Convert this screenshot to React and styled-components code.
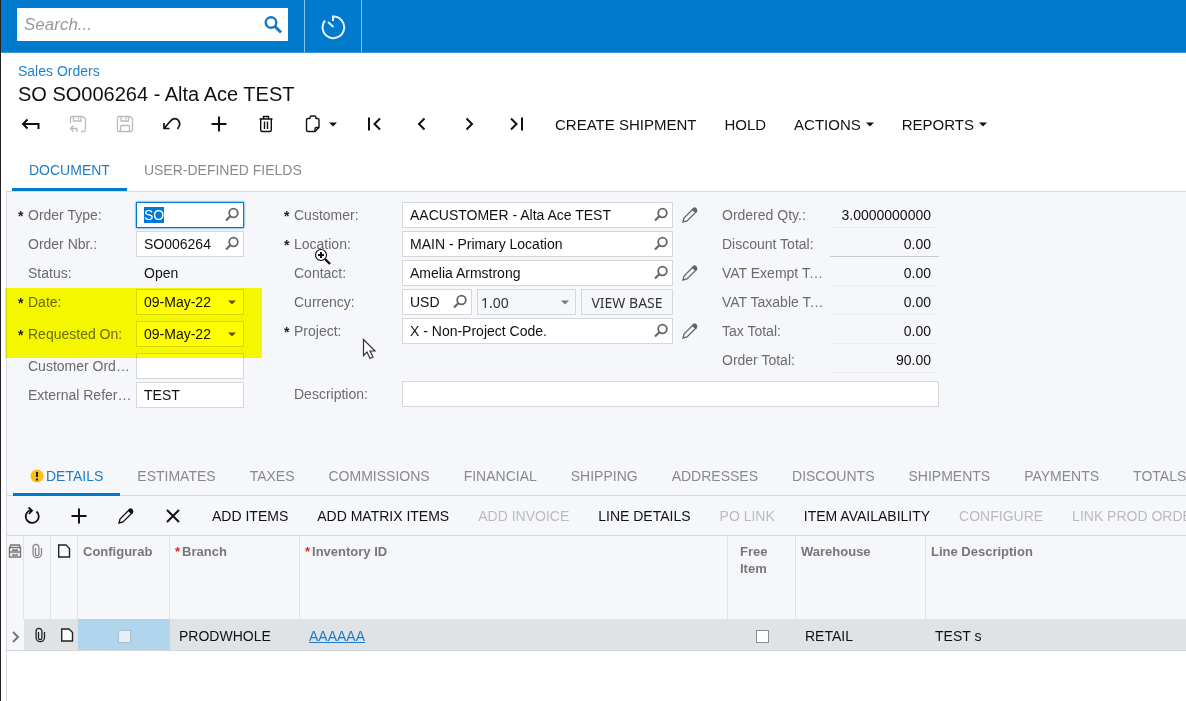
import React, { useEffect, useRef } from "react";
import styled, { createGlobalStyle } from "styled-components";

const GlobalStyle = createGlobalStyle`
  * {
    box-sizing: border-box;
  }

  body {
    margin: 0;
    background: #fff;
    color: #111;
    font-family: "Liberation Sans", Arial, sans-serif;
    font-size: 14px;
    overflow: hidden;
  }

  button,
  input,
  select {
    font: inherit;
    color: inherit;
  }

  ::selection {
    background: #0078d7;
    color: #fff;
  }
`;

const Page = styled.div`
  position: relative;
  display: flex;
  flex-direction: column;
  min-height: 100vh;
  border-left: 1px solid #222;
`;

const Header = styled.header`
  display: flex;
  height: 53px;
  padding-left: 16px;
  background: #007acc;
  border-bottom: 1px solid #3f9bd9;
`;

const SearchBox = styled.div`
  display: flex;
  align-items: center;
  width: 271px;
  height: 33px;
  margin: 8px 16px 0 0;
  background: #fff;
`;

const SearchInput = styled.input`
  flex: 1;
  min-width: 0;
  padding: 0 7px;
  border: 0;
  outline: 0;
  background: none;
  font-size: 17px;
  font-style: italic;

  &::placeholder {
    color: #999;
  }
`;

const BareButton = styled.button`
  display: flex;
  align-items: center;
  justify-content: center;
  padding: 0;
  border: 0;
  background: none;
`;

const SearchButton = styled(BareButton)`
  width: 30px;
  height: 30px;
`;

const ClockButton = styled(BareButton)`
  width: 58px;
  padding-top: 2px;
  border: 1px solid #8cc3e8;
  border-width: 0 1px;
`;

const Heading = styled.div`
  padding: 9px 0 0 17px;
`;

const Crumb = styled.a`
  display: block;
  color: #1f82cc;
  line-height: 18px;
  text-decoration: none;
`;

const Title = styled.h1`
  margin: 0;
  font-size: 20px;
  font-weight: 400;
  line-height: 28px;
`;

const Toolbar = styled.div`
  display: flex;
  align-items: center;
  height: ${(p) => p.$height}px;
  padding-left: ${(p) => p.$indent}px;
  font-size: ${(p) => p.$size}px;
  overflow: hidden;
`;

const ToolIcon = styled(BareButton)`
  flex: none;
  gap: 6px;
  width: ${(p) => (p.$menu ? 62 : 47)}px;
  height: 30px;
  color: ${(p) => (p.disabled ? "#bbb" : "#111")};
`;

const ToolTexts = styled.div`
  display: flex;
  flex: none;
  gap: ${(p) => p.$gap}px;
  padding-left: 2px;
`;

const ToolText = styled(BareButton)`
  flex: none;
  gap: 5px;
  height: 30px;
  padding: 0 14px;
  color: ${(p) => (p.disabled ? "#bbb" : "#111")};
  white-space: nowrap;
`;

const Tabs = styled.div`
  display: flex;
  height: ${(p) => p.$height}px;
  padding-left: ${(p) => p.$indent}px;
  overflow: hidden;
`;

const Tab = styled.button`
  display: flex;
  flex: none;
  align-items: center;
  gap: 2px;
  padding: ${(p) => p.$top || 2}px 17px 0;
  border: 0;
  border-bottom: 3px solid ${(p) => (p.$active ? "#007acc" : "transparent")};
  background: none;
  color: ${(p) => (p.$active ? "#1f7cc4" : "#8a8a8a")};
  white-space: nowrap;
`;

const Panel = styled.main`
  flex: 1;
  margin-left: 5px;
  border: 1px solid #d5d8dc;
  border-width: 1px 0 0 1px;
`;

const Form = styled.form`
  position: relative;
  display: flex;
  gap: 40px;
  padding: 10px 0 48px 11px;
  background: #f5f7fa;
`;

const Column = styled.div`
  display: flex;
  flex-direction: column;
  gap: ${(p) => p.$gap || 3}px;
  width: ${(p) => p.$width}px;
`;

const Columns = styled.div`
  display: flex;
  gap: 16px;
`;

const Row = styled.div`
  display: flex;
  align-items: center;
  height: 26px;
`;

const Required = styled.span`
  flex: none;
  width: 10px;
  padding-top: 2px;
  color: #222;
  font-weight: 700;
`;

const Label = styled.label`
  flex: none;
  width: ${(p) => p.$width}px;
  padding-right: 4px;
  overflow: hidden;
  color: #6b6b6b;
  line-height: 26px;
  text-overflow: ellipsis;
  white-space: nowrap;
`;

const Box = styled.div`
  display: flex;
  flex: ${(p) => (p.$width ? "none" : 1)};
  width: ${(p) => (p.$width ? p.$width + "px" : "auto")};
  min-width: 0;
  height: 26px;
  border: 1px solid #d5d8db;
  background: ${(p) => (p.$muted ? "#f5f7fa" : "#fff")};

  &:focus-within {
    border-color: #007acc;
    box-shadow: 0 0 2px #007acc;
  }
`;

const Input = styled.input`
  flex: 1;
  width: 100%;
  min-width: 0;
  padding: 0 0 0 7px;
  border: 0;
  outline: 0;
  background: none;
`;

const FieldButton = styled(BareButton)`
  flex: none;
  width: 22px;
`;

const EditButton = styled(BareButton)`
  flex: none;
  width: 33px;
  height: 26px;
`;

const StaticText = styled.output`
  padding-left: 8px;
`;

const RateBox = styled(Box)`
  position: relative;
  margin: 0 5px;
`;

const RateSelect = styled.select`
  flex: 1;
  padding: 0 3px;
  border: 0;
  background: none;
  appearance: none;
  font-family: "Noto Sans", sans-serif;
  font-size: 14px;
  color: #333;
  opacity: 1;
`;

const RateArrow = styled.span`
  position: absolute;
  top: 10px;
  right: 6px;
  display: flex;
  pointer-events: none;
`;

const ViewBase = styled.button`
  width: 92px;
  height: 26px;
  padding: 0;
  border: 1px solid #d5d8db;
  background: #f5f7fa;
  font-family: "Noto Sans", sans-serif;
  font-size: 14px;
  color: #333;
`;

const Amount = styled.output`
  flex: 1;
  height: 26px;
  padding-right: 8px;
  border-bottom: 1px solid ${(p) => (p.$strong ? "#c8cbce" : "#eceef1")};
  line-height: 26px;
  text-align: right;
`;

const DescriptionRow = styled(Row)`
  margin-top: 5px;
`;

const Highlight = styled.div`
  position: absolute;
  top: 96px;
  left: -2px;
  width: 257px;
  height: 70px;
  background: #ff0;
  mix-blend-mode: multiply;
  pointer-events: none;
`;

const Pointer = styled.svg`
  position: absolute;
  top: ${(p) => p.$top}px;
  left: ${(p) => p.$left}px;
  pointer-events: none;
`;

const Details = styled.section`
  background: #f5f7fa;
`;

const Divider = styled.div`
  height: 1px;
  margin-top: -1px;
  background: #d5d8dc;
`;

const Grid = styled.table`
  width: 100%;
  border-collapse: separate;
  border-spacing: 0;
  table-layout: fixed;
  border-top: 1px solid #d5d8dc;
`;

const HeadCell = styled.th`
  height: 83px;
  padding: ${(p) => (p.$icon ? "5px 0 0" : "7px 4px 0")};
  padding-left: ${(p) => (p.$icon ? 0 : p.$indent || 5)}px;
  border-right: 1px solid #dfe2e6;
  color: #777;
  font-size: 13px;
  line-height: 17px;
  text-align: ${(p) => (p.$icon ? "center" : "left")};
  vertical-align: top;
  overflow: hidden;
  white-space: ${(p) => (p.$wrap ? "normal" : "nowrap")};

  &:last-child {
    border-right: 0;
  }
`;

const Star = styled.span`
  margin-right: 2px;
  color: #e22;
`;

const Cell = styled.td`
  height: 32px;
  padding: 2px 0 0 ${(p) => (p.$center ? 0 : 9)}px;
  border-bottom: 1px solid #d3d6da;
  background: ${(p) => p.$bg || "#dfe3e6"};
  text-align: ${(p) => (p.$center ? "center" : "left")};
`;

const IconCell = styled(Cell)`
  padding: 0 0 0 4px;
`;

const CellLink = styled.a`
  color: #1f7cc4;
`;

const Check = styled.input`
  width: 13px;
  height: 13px;
  margin: 0;
  appearance: none;
  border: 1px solid ${(p) => (p.disabled ? "#a9bfcd" : "#8c8c8c")};
  background: ${(p) => (p.disabled ? "#e3f0f8" : "#fff")};
  vertical-align: middle;
`;

const CenteredIcon = styled.svg`
  display: inline-block;
  flex: none;
  vertical-align: middle;
`;

const Icon = ({ size = 20, width = 2, color = "currentColor", children }) => (
  <CenteredIcon
    width={size}
    height={size}
    viewBox={`0 0 ${size} ${size}`}
    fill="none"
    stroke={color}
    strokeWidth={width}
    aria-hidden="true"
  >
    {children}
  </CenteredIcon>
);

const Caret = ({ color = "#111" }) => (
  <svg width="8" height="5" viewBox="0 0 8 5" aria-hidden="true">
    <path d="M0 .5h8L4 4.5z" fill={color} />
  </svg>
);

const BackIcon = () => (
  <Icon>
    <path d="M17.500 15V10H2.500M6.500 5.500L2 10l4.500 4.500" />
  </Icon>
);

const SaveCloseIcon = () => (
  <Icon width={1.3}>
    <path d="M2.500 9V4Q2.500 2.500 4 2.500h11L17.500 5v11q0 1.500-1.500 1.500H13M5.500 3v4h7.500V3M10.500 3.500v2M9 18v-3.500H3M5.500 11.500l-3 3l3 3" />
  </Icon>
);

const SaveIcon = () => (
  <Icon width={1.3}>
    <path d="M4 2.500h11L17.500 5v11q0 1.500-1.500 1.500H4q-1.500 0-1.500-1.500V4Q2.500 2.500 4 2.500zM6 3v4h7.500V3M11 3.500v2M5.500 17.500V13q0-1.500 1.500-1.500h6q1.500 0 1.500 1.500v4.500" />
  </Icon>
);

const UndoIcon = () => (
  <Icon width={1.7}>
    <path d="M2 9v5.500h5.500M2.500 14L8 7.500Q11.500 3 15.500 5.500Q20 9.500 15.500 15" />
  </Icon>
);

const PlusIcon = () => (
  <Icon>
    <path d="M10 2.500v15M2.500 10h15" />
  </Icon>
);

const TrashIcon = () => (
  <Icon width={1.4}>
    <path d="M3.500 5h13M7.500 4.500V2.500h5v2M4.700 5.500v10.500q0 1.500 1.500 1.500h7.600q1.500 0 1.500-1.500V5.500M8.500 7.500v7.500M11.500 7.500v7.500" />
  </Icon>
);

const ClipboardIcon = () => (
  <Icon width={1.4}>
    <path d="M7 4.500H5q-1.500 0-1.500 1.500v10q0 1.500 1.500 1.500h7l4-4V6q0-1.500-1.500-1.500H13M7 5V3.500Q7 2 8.500 2h3Q13 2 13 3.500V5M16 13.500h-2.500q-1.500 0-1.500 1.500v2.500" />
  </Icon>
);

const FirstIcon = () => (
  <Icon>
    <path d="M4 3.500v13M15 4.500L9.500 10l5.500 5.500" />
  </Icon>
);

const PrevIcon = () => (
  <Icon>
    <path d="M12.500 4.500L7 10l5.500 5.500" />
  </Icon>
);

const NextIcon = () => (
  <Icon>
    <path d="M7.500 4.500l5.500 5.500l-5.500 5.500" />
  </Icon>
);

const LastIcon = () => (
  <Icon>
    <path d="M16 3.500v13M5 4.500l5.500 5.500L5 15.500" />
  </Icon>
);

const RefreshIcon = () => (
  <Icon width={1.8}>
    <path d="M14.500 5.500a6.500 6.500 0 1 1-9 .5Q7 4.300 9.500 4.300M6.500 1.500l3.500 3l-3 3.500" />
  </Icon>
);

const PencilIcon = ({ color }) => (
  <Icon width={1.3} color={color}>
    <path d="M3 17l1-4L13 4q1.700-1.500 3 0t0 3L7 16zM12.500 4.500l3 3" />
    <path d="M13 4q1.700-1.500 3 0t0 3z" fill={color || "currentColor"} />
  </Icon>
);

const CrossIcon = () => (
  <Icon>
    <path d="M4 4l12 12M16 4L4 16" />
  </Icon>
);

const LookupIcon = () => (
  <Icon size={16} width={1.8} color="#666">
    <circle cx="9.500" cy="6" r="4.300" />
    <path d="M6.500 9L2 13.500" strokeWidth="2.200" />
  </Icon>
);

const SearchIcon = () => (
  <Icon width={2.4} color="#1579c4">
    <circle cx="8" cy="7.500" r="5.300" />
    <path d="M12 11.500l6 6" strokeWidth="3" />
  </Icon>
);

const ClockIcon = () => (
  <Icon size={26} width={2} color="#e2f2fc">
    <path d="M13 7V2.500A10.800 10.800 0 1 1 5 6.500M8 8l5.500 5" />
  </Icon>
);

const ClipIcon = ({ color = "#222" }) => (
  <Icon size={16} width={1.3} color={color}>
    <path d="M6.500 5v6a1.700 1.700 0 0 0 3.400 0V4.300a2.900 2.900 0 0 0-5.800 0V10.500a4.200 4.200 0 0 0 8.400 0V5" />
  </Icon>
);

const NoteIcon = () => (
  <Icon size={16} width={1.4} color="#222">
    <path d="M2.700 2h7.300l3.500 3.500v8.500H2.700z" fill="#fafbfc" />
  </Icon>
);

const SettingsIcon = () => (
  <Icon size={14} width={1.4} color="#777">
    <path d="M2.500 3.500V1h9v2.500M1.500 3.500h11v9.500h-11zM1.500 8h11M5 5v1.200h4V5M5 9.800V11h4V9.800" />
  </Icon>
);

const WarningIcon = () => (
  <svg width="14" height="14" viewBox="0 0 14 14" aria-hidden="true">
    <circle cx="7" cy="7" r="6.500" fill="#fdc010" />
    <path d="M7 3v5M7 9.500v2" stroke="#222" strokeWidth="2" />
  </svg>
);

const Field = ({ id, label, required, labelWidth = 108, children }) => (
  <Row>
    <Required>{required ? "*" : ""}</Required>
    <Label htmlFor={id} $width={labelWidth}>
      {label}
    </Label>
    {children}
  </Row>
);

const Lookup = ({ id, value, width, inputRef }) => (
  <Box $width={width}>
    <Input id={id} ref={inputRef} defaultValue={value} />
    <FieldButton type="button" aria-label="Look up">
      <LookupIcon />
    </FieldButton>
  </Box>
);

const DateBox = ({ id, value }) => (
  <Box>
    <Input id={id} defaultValue={value} />
    <FieldButton type="button" aria-label="Open calendar">
      <Caret color="#555" />
    </FieldButton>
  </Box>
);

const Edit = () => (
  <EditButton type="button" aria-label="Edit">
    <PencilIcon color="#666" />
  </EditButton>
);

const totals = [
  { id: "qty", label: "Ordered Qty.:", value: "3.0000000000" },
  { id: "discount", label: "Discount Total:", value: "0.00", strong: true },
  { id: "exempt", label: "VAT Exempt Total:", value: "0.00" },
  { id: "taxable", label: "VAT Taxable Total:", value: "0.00" },
  { id: "tax", label: "Tax Total:", value: "0.00" },
  { id: "total", label: "Order Total:", value: "90.00" },
];

const detailTabs = [
  "ESTIMATES",
  "TAXES",
  "COMMISSIONS",
  "FINANCIAL",
  "SHIPPING",
  "ADDRESSES",
  "DISCOUNTS",
  "SHIPMENTS",
  "PAYMENTS",
  "TOTALS",
];

const gridActions = [
  { name: "ADD ITEMS" },
  { name: "ADD MATRIX ITEMS" },
  { name: "ADD INVOICE", disabled: true },
  { name: "LINE DETAILS" },
  { name: "PO LINK", disabled: true },
  { name: "ITEM AVAILABILITY" },
  { name: "CONFIGURE", disabled: true },
  { name: "LINK PROD ORDER", disabled: true },
];

const columnWidths = [17, 27, 27, 92, 130, 428, 68, 130];

const OrderForm = () => {
  const orderType = useRef(null);

  useEffect(() => {
    orderType.current.focus();
    orderType.current.select();
  }, []);

  return (
    <Form>
      <Column $width={226} $gap={6}>
        <Column>
          <Field id="type" label="Order Type:" required>
            <Lookup id="type" value="SO" inputRef={orderType} />
          </Field>
          <Field id="nbr" label="Order Nbr.:">
            <Lookup id="nbr" value="SO006264" />
          </Field>
          <Field id="status" label="Status:">
            <StaticText id="status">Open</StaticText>
          </Field>
          <Field id="date" label="Date:" required>
            <DateBox id="date" value="09-May-22" />
          </Field>
        </Column>
        <Field id="requested" label="Requested On:" required>
          <DateBox id="requested" value="09-May-22" />
        </Field>
        <Column>
          <Field id="customerOrder" label="Customer Order Nbr.:">
            <Box>
              <Input id="customerOrder" />
            </Box>
          </Field>
          <Field id="reference" label="External Reference:">
            <Box>
              <Input id="reference" defaultValue="TEST" />
            </Box>
          </Field>
        </Column>
      </Column>

      <Column $width={655}>
        <Columns>
          <Column $width={422}>
            <Field id="customer" label="Customer:" required>
              <Lookup id="customer" value="AACUSTOMER - Alta Ace TEST" width={271} />
              <Edit />
            </Field>
            <Field id="location" label="Location:" required>
              <Lookup id="location" value="MAIN - Primary Location" width={271} />
            </Field>
            <Field id="contact" label="Contact:">
              <Lookup id="contact" value="Amelia Armstrong" width={271} />
              <Edit />
            </Field>
            <Field id="currency" label="Currency:">
              <Lookup id="currency" value="USD" width={70} />
              <RateBox $width={99} $muted>
                <RateSelect aria-label="Rate" disabled>
                  <option>1.00</option>
                </RateSelect>
                <RateArrow>
                  <Caret color="#777" />
                </RateArrow>
              </RateBox>
              <ViewBase type="button">VIEW BASE</ViewBase>
            </Field>
            <Field id="project" label="Project:" required>
              <Lookup id="project" value="X - Non-Project Code." width={271} />
              <Edit />
            </Field>
          </Column>
          <Column $width={217}>
            {totals.map((t) => (
              <Row key={t.id}>
                <Label htmlFor={t.id} $width={108}>
                  {t.label}
                </Label>
                <Amount id={t.id} $strong={t.strong}>
                  {t.value}
                </Amount>
              </Row>
            ))}
          </Column>
        </Columns>
        <DescriptionRow>
          <Required />
          <Label htmlFor="description" $width={108}>
            Description:
          </Label>
          <Box>
            <Input id="description" />
          </Box>
        </DescriptionRow>
      </Column>
      <Highlight />
    </Form>
  );
};

const DetailsGrid = () => (
  <Grid>
    <colgroup>
      {columnWidths.map((w, i) => (
        <col key={i} width={w} />
      ))}
      <col />
    </colgroup>
    <thead>
      <tr>
        <HeadCell $icon>
          <SettingsIcon />
        </HeadCell>
        <HeadCell $icon>
          <ClipIcon color="#888" />
        </HeadCell>
        <HeadCell $icon>
          <NoteIcon />
        </HeadCell>
        <HeadCell>Configurab</HeadCell>
        <HeadCell>
          <Star>*</Star>Branch
        </HeadCell>
        <HeadCell>
          <Star>*</Star>Inventory ID
        </HeadCell>
        <HeadCell $indent={12} $wrap>
          Free Item
        </HeadCell>
        <HeadCell>Warehouse</HeadCell>
        <HeadCell>Line Description</HeadCell>
      </tr>
    </thead>
    <tbody>
      <tr>
        <Cell $center $bg="#f5f7fa">
          <Icon size={12} color="#777">
            <path d="M3 1l5 5l-5 5" />
          </Icon>
        </Cell>
        <IconCell $center>
          <ClipIcon />
        </IconCell>
        <IconCell $center>
          <NoteIcon />
        </IconCell>
        <Cell $center $bg="#b1d5ec">
          <Check type="checkbox" aria-label="Configurable" disabled />
        </Cell>
        <Cell>PRODWHOLE</Cell>
        <Cell>
          <CellLink href="#item">AAAAAA</CellLink>
        </Cell>
        <Cell $center>
          <Check type="checkbox" aria-label="Free item" />
        </Cell>
        <Cell>RETAIL</Cell>
        <Cell>TEST s</Cell>
      </tr>
    </tbody>
  </Grid>
);

const App = () => (
  <>
    <GlobalStyle />
    <Page>
      <Header>
        <SearchBox>
          <SearchInput placeholder="Search..." aria-label="Search" />
          <SearchButton aria-label="Search">
            <SearchIcon />
          </SearchButton>
        </SearchBox>
        <ClockButton aria-label="Business date">
          <ClockIcon />
        </ClockButton>
      </Header>

      <Heading>
        <Crumb href="#orders">Sales Orders</Crumb>
        <Title>SO SO006264 - Alta Ace TEST</Title>
      </Heading>

      <Toolbar $height={32} $size={15} $indent={6}>
        <ToolIcon aria-label="Back">
          <BackIcon />
        </ToolIcon>
        <ToolIcon aria-label="Save and close" disabled>
          <SaveCloseIcon />
        </ToolIcon>
        <ToolIcon aria-label="Save" disabled>
          <SaveIcon />
        </ToolIcon>
        <ToolIcon aria-label="Undo">
          <UndoIcon />
        </ToolIcon>
        <ToolIcon aria-label="Add">
          <PlusIcon />
        </ToolIcon>
        <ToolIcon aria-label="Delete">
          <TrashIcon />
        </ToolIcon>
        <ToolIcon aria-label="Clipboard" $menu>
          <ClipboardIcon />
          <Caret />
        </ToolIcon>
        <ToolIcon aria-label="First">
          <FirstIcon />
        </ToolIcon>
        <ToolIcon aria-label="Previous">
          <PrevIcon />
        </ToolIcon>
        <ToolIcon aria-label="Next">
          <NextIcon />
        </ToolIcon>
        <ToolIcon aria-label="Last">
          <LastIcon />
        </ToolIcon>
        <ToolTexts $gap={0}>
          <ToolText>CREATE SHIPMENT</ToolText>
          <ToolText>HOLD</ToolText>
          <ToolText>
            ACTIONS
            <Caret />
          </ToolText>
          <ToolText>
            REPORTS
            <Caret />
          </ToolText>
        </ToolTexts>
      </Toolbar>

      <Tabs $height={51} $indent={11}>
        <Tab $active $top={12}>
          DOCUMENT
        </Tab>
        <Tab $top={12}>USER-DEFINED FIELDS</Tab>
      </Tabs>

      <Panel>
        <OrderForm />
        <Details>
          <Tabs $height={40} $indent={6}>
            <Tab $active>
              <WarningIcon />
              DETAILS
            </Tab>
            {detailTabs.map((name) => (
              <Tab key={name}>{name}</Tab>
            ))}
          </Tabs>
          <Divider />
          <Toolbar $height={39} $size={14} $indent={1}>
            <ToolIcon aria-label="Refresh">
              <RefreshIcon />
            </ToolIcon>
            <ToolIcon aria-label="Add row">
              <PlusIcon />
            </ToolIcon>
            <ToolIcon aria-label="Edit row">
              <PencilIcon />
            </ToolIcon>
            <ToolIcon aria-label="Delete row">
              <CrossIcon />
            </ToolIcon>
            <ToolTexts $gap={1}>
              {gridActions.map((a) => (
                <ToolText key={a.name} disabled={a.disabled}>
                  {a.name}
                </ToolText>
              ))}
            </ToolTexts>
          </Toolbar>
          <DetailsGrid />
        </Details>
      </Panel>

      <Pointer width="18" height="18" viewBox="0 0 18 18" $top={248} $left={313}>
        <circle cx="7" cy="7" r="5.500" fill="#fff" stroke="#111" strokeWidth="1.200" />
        <path d="M7 4v6M4 7h6" stroke="#111" strokeWidth="2" />
        <path d="M11 11l5 5" stroke="#111" strokeWidth="2.400" />
      </Pointer>
      <Pointer width="16" height="22" viewBox="0 0 16 22" $top={338} $left={361}>
        <path
          d="M1.500 1.500v16l3.500-3.500l3 6.500l3-1.500l-3-6h5z"
          fill="#fff"
          stroke="#333"
          strokeWidth="1.200"
        />
      </Pointer>
    </Page>
  </>
);

export default App;
